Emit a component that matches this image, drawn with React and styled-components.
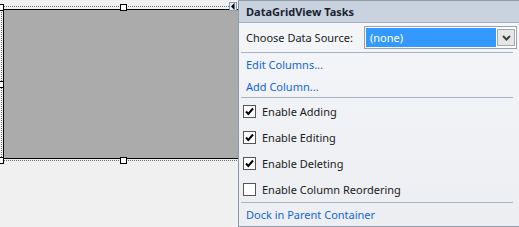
import React from "react";
import styled, { createGlobalStyle } from "styled-components";

const Global = createGlobalStyle`
  html, body { margin: 0; padding: 0; background: #f0f0f0; }
  body { font-family: "Noto Sans", "Open Sans", sans-serif; overflow: hidden; }
`;

const Canvas = styled.div`
  position: relative;
  width: 519px;
  height: 227px;
  background: #f0f0f0;
  overflow: hidden;
`;

const SelectionFrame = styled.div`
  position: absolute;
  left: 1px;
  top: 6px;
  width: 246px;
  height: 155px;
  box-sizing: border-box;
  border: 1px dotted #6e6e6e;
`;

const GridControl = styled.div`
  position: absolute;
  left: 3px;
  top: 9px;
  width: 244px;
  height: 150px;
  box-sizing: border-box;
  border: 1px solid #000;
  background: #ababab;
`;

const Handle = styled.div`
  position: absolute;
  width: 7px;
  height: 7px;
  box-sizing: border-box;
  border: 1px solid #000;
  background: #fff;
`;

const SmartTag = styled.div`
  position: absolute;
  left: 229px;
  top: 2px;
  width: 8px;
  height: 9px;
  box-sizing: border-box;
  border: 1px solid #8a9bb0;
  background: #e4ecf6;
  display: flex;
  align-items: center;
  justify-content: center;
`;

const Panel = styled.div`
  position: absolute;
  left: 238px;
  top: 0;
  width: 290px;
  height: 227px;
  box-sizing: border-box;
  border: 1px solid #8f9aa8;
  background: linear-gradient(180deg, #f4f6f9 0%, #eceef2 100%);
  display: flex;
  flex-direction: column;
  color: #1b1b1b;
  font-size: 11px;
`;

const Header = styled.div`
  height: 21px;
  border-bottom: 1px solid #a6b0bd;
  background: #c9d3df;
  display: flex;
  align-items: center;
  padding-left: 7px;
  font-weight: bold;
  color: #1b2330;
`;

const Row = styled.div`
  height: ${(p) => p.$h}px;
  display: flex;
  align-items: center;
  padding-left: ${(p) => p.$pad ?? 7}px;
  white-space: nowrap;
`;

const Separator = styled.div`
  height: 1px;
  margin: 0 8px 0 2px;
  width: 272px;
  background: #a9b3c0;
`;

const Label = styled.span`
  width: 118px;
`;

const Combo = styled.div`
  width: 153px;
  height: 23px;
  box-sizing: border-box;
  border: 1px solid #9aa3ad;
  background: #fff;
  padding: 1px;
  display: flex;
  gap: 1px;
`;

const ComboValue = styled.div`
  flex: 1;
  background: #3399ff;
  color: #fff;
  display: flex;
  align-items: center;
  padding-left: 4px;
`;

const ComboButton = styled.div`
  width: 18px;
  margin: 1px 0;
  box-sizing: border-box;
  border: 1px solid #a8a8a8;
  background: #e6e6e6;
  display: flex;
  align-items: center;
  justify-content: center;
`;

const Link = styled.span`
  color: #1166d6;
`;

const Box = styled.span`
  width: 13px;
  height: 13px;
  box-sizing: border-box;
  border: 1px solid #555;
  background: #fff;
  display: inline-flex;
  align-items: center;
  justify-content: center;
  margin-right: 6px;
`;

const Check = () => (
  <svg width="11" height="11" viewBox="0 0 11 11">
    <path d="M2 5.5 L4.3 8 L9 2.5" fill="none" stroke="#000" strokeWidth="2" />
  </svg>
);

const CheckRow = ({ label, checked }) => (
  <Row $h={26} $pad={4}>
    <Box>{checked && <Check />}</Box>
    <span>{label}</span>
  </Row>
);

const handles = [
  { left: -3, top: 4 },
  { left: 120, top: 4 },
  { left: -3, top: 81 },
  { left: -3, top: 157 },
  { left: 120, top: 157 },
];

export default function App() {
  return (
    <>
      <Global />
      <Canvas>
        <SelectionFrame />
        <GridControl />
        {handles.map((h, i) => (
          <Handle key={i} style={{ left: h.left, top: h.top }} />
        ))}
        <SmartTag>
          <svg width="4" height="7" viewBox="0 0 4 7">
            <path d="M3.5 0 L0 3.5 L3.5 7 Z" fill="#000" />
          </svg>
        </SmartTag>
        <Panel>
          <Header>DataGridView Tasks</Header>
          <Row $h={29}>
            <Label>Choose Data Source:</Label>
            <Combo>
              <ComboValue>(none)</ComboValue>
              <ComboButton>
                <svg width="9" height="6" viewBox="0 0 9 6">
                  <path d="M1 1 L4.5 4.5 L8 1" fill="none" stroke="#404040" strokeWidth="2" />
                </svg>
              </ComboButton>
            </Combo>
          </Row>
          <Separator />
          <Row $h={23}>
            <Link>Edit Columns...</Link>
          </Row>
          <Row $h={21}>
            <Link>Add Column...</Link>
          </Row>
          <Separator />
          <CheckRow label="Enable Adding" checked />
          <CheckRow label="Enable Editing" checked />
          <CheckRow label="Enable Deleting" checked />
          <CheckRow label="Enable Column Reordering" />
          <Separator />
          <Row $h={23}>
            <Link>Dock in Parent Container</Link>
          </Row>
        </Panel>
      </Canvas>
    </>
  );
}
